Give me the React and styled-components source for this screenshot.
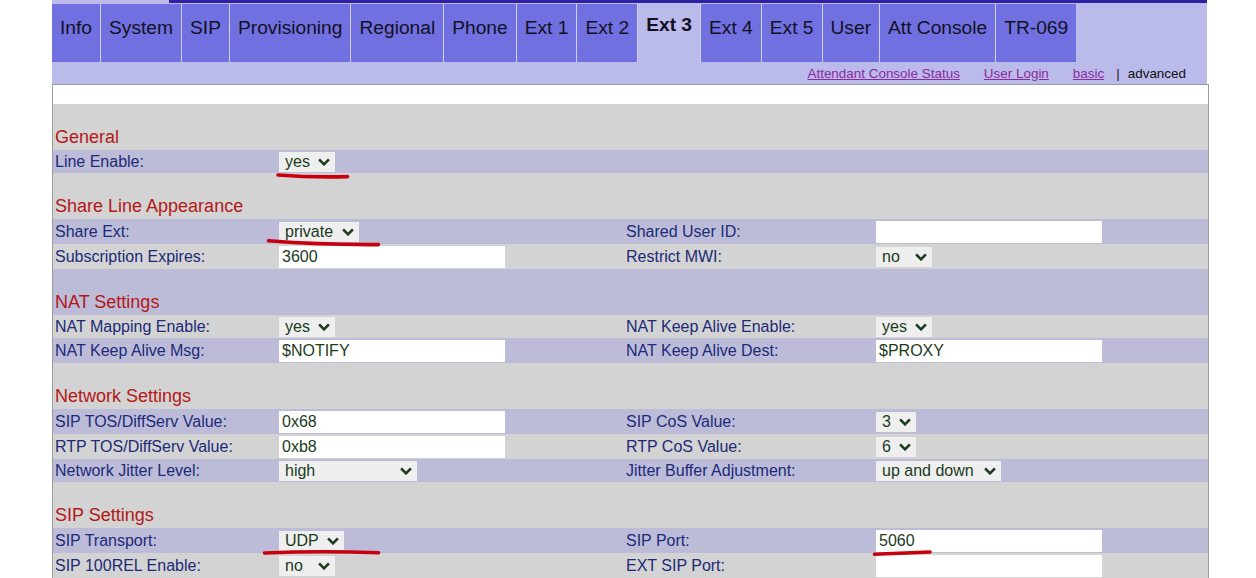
import React from 'react';
import styled, { createGlobalStyle } from 'styled-components';

const LAV = '#babaeb';
const TAB = '#7070e0';
const DARK = '#2d22a2';
const ROW_GREY = '#d3d3d3';
const ROW_LAV = '#bcbcd9';
const LABEL = '#202a78';
const HEAD = '#b31818';
const VALUE = '#1b3b1b';
const LINK = '#8b2a9b';

const GlobalStyle = createGlobalStyle`
  html, body { margin: 0; padding: 0; overflow: hidden; background: #ffffff; }
  body { font-family: "Liberation Sans", Arial, sans-serif; }
`;

const Root = styled.div`
  position: relative;
  width: 1256px;
  height: 578px;
  overflow: hidden;
`;

const Page = styled.div`
  margin-left: 52px;
  width: 1157px;
`;

const TopStrip = styled.div`
  display: flex;
  width: 1155px;
  height: 4px;
  background: ${LAV};
`;

const TopStripDark = styled.div`
  margin-left: 117px;
  flex: 1;
  height: 3px;
  background: ${DARK};
`;

const TabBar = styled.nav`
  display: flex;
  width: 1155px;
  height: 58px;
  background: ${LAV};
`;

const Tab = styled.div`
  padding: ${(p) => (p.$active ? '10px' : '13px')} 8px 0;
  font-size: 19.2px;
  line-height: 22px;
  font-weight: ${(p) => (p.$active ? 700 : 400)};
  color: #141024;
  background: ${(p) => (p.$active ? LAV : TAB)};
  white-space: nowrap;
  & + & {
    border-left: 1px solid #d2d2e6;
  }
`;

const LinkBar = styled.div`
  display: flex;
  justify-content: flex-end;
  align-items: center;
  width: 1155px;
  height: 22px;
  box-sizing: border-box;
  padding-right: 21px;
  background: ${LAV};
  font-size: 13.45px;
  line-height: 15px;
`;

const NavLink = styled.a`
  margin-left: 24px;
  color: ${LINK};
  text-decoration: underline;
  cursor: pointer;
`;

const Divider = styled.span`
  margin: 0 8px 0 12px;
  color: #222;
`;

const Current = styled.span`
  color: #111;
`;

const Panel = styled.section`
  width: 1157px;
  box-sizing: border-box;
  border: 1px solid #9c9c9c;
  border-bottom: none;
  background: #ffffff;
`;

const PanelTop = styled.div`
  height: 19px;
`;

const SectionHead = styled.div`
  display: flex;
  align-items: flex-end;
  height: 46px;
  box-sizing: border-box;
  padding: 0 0 2px 2px;
  background: ${(p) => p.$tone};
`;

const HeadTitle = styled.h3`
  margin: 0;
  font-size: 18px;
  line-height: 21px;
  font-weight: 400;
  color: ${HEAD};
`;

const FieldRow = styled.div`
  display: grid;
  grid-template-columns: 226px 345px 252px 1fr;
  align-items: baseline;
  padding: 2px 0 1px;
  background: ${(p) => p.$tone};
`;

const Label = styled.span`
  padding-left: 2px;
  font-size: 16px;
  color: ${LABEL};
  white-space: nowrap;
`;

const Cell = styled.div`
  display: flex;
  align-items: baseline;
`;

const TextInput = styled.input`
  width: 226px;
  height: 22px;
  box-sizing: border-box;
  margin: 0;
  padding: 0 3px;
  border: none;
  outline: none;
  background: #ffffff;
  font: 16px "Liberation Sans", Arial, sans-serif;
  color: ${VALUE};
`;

const SelectBox = styled.div`
  display: inline-flex;
  align-items: center;
  justify-content: space-between;
  width: ${(p) => p.$w}px;
  height: 20px;
  box-sizing: border-box;
  padding: 0 5px 0 6px;
  background: #efefef;
  font-size: 16px;
  line-height: 18px;
  color: ${VALUE};
  white-space: nowrap;
`;

const Chevron = styled.svg`
  flex: none;
  width: 12px;
  height: 8px;
`;

const Overlay = styled.svg`
  position: absolute;
  left: 0;
  top: 0;
  width: 1256px;
  height: 578px;
  pointer-events: none;
`;

const Scribble = styled.path`
  fill: none;
  stroke: #c8000e;
  stroke-width: 3.6;
  stroke-linecap: round;
`;

const Select = ({ value, width }) => (
  <SelectBox $w={width}>
    <span>{value}</span>
    <Chevron viewBox="0 0 12 8">
      <path d="M1.1 1.3 L6 6.3 L10.9 1.3" fill="none" stroke={VALUE} strokeWidth="2.6" />
    </Chevron>
  </SelectBox>
);

const Control = ({ c }) => {
  if (!c) return <Cell />;
  if (c.type === 'select') {
    return (
      <Cell>
        <Select value={c.value} width={c.w} />
      </Cell>
    );
  }
  return (
    <Cell>
      <TextInput type="text" defaultValue={c.value} />
    </Cell>
  );
};

const sel = (value, w) => ({ type: 'select', value, w });
const inp = (value) => ({ type: 'input', value });

const sections = [
  {
    title: 'General',
    rows: [{ l1: 'Line Enable:', c1: sel('yes', 56) }],
  },
  {
    title: 'Share Line Appearance',
    rows: [
      { l1: 'Share Ext:', c1: sel('private', 80), l2: 'Shared User ID:', c2: inp('') },
      { l1: 'Subscription Expires:', c1: inp('3600'), l2: 'Restrict MWI:', c2: sel('no', 56) },
    ],
  },
  {
    title: 'NAT Settings',
    rows: [
      { l1: 'NAT Mapping Enable:', c1: sel('yes', 56), l2: 'NAT Keep Alive Enable:', c2: sel('yes', 56) },
      { l1: 'NAT Keep Alive Msg:', c1: inp('$NOTIFY'), l2: 'NAT Keep Alive Dest:', c2: inp('$PROXY') },
    ],
  },
  {
    title: 'Network Settings',
    rows: [
      { l1: 'SIP TOS/DiffServ Value:', c1: inp('0x68'), l2: 'SIP CoS Value:', c2: sel('3', 40) },
      { l1: 'RTP TOS/DiffServ Value:', c1: inp('0xb8'), l2: 'RTP CoS Value:', c2: sel('6', 40) },
      { l1: 'Network Jitter Level:', c1: sel('high', 138), l2: 'Jitter Buffer Adjustment:', c2: sel('up and down', 125) },
    ],
  },
  {
    title: 'SIP Settings',
    rows: [
      { l1: 'SIP Transport:', c1: sel('UDP', 65), l2: 'SIP Port:', c2: inp('5060') },
      { l1: 'SIP 100REL Enable:', c1: sel('no', 56), l2: 'EXT SIP Port:', c2: inp('') },
    ],
  },
];

const tabs = ['Info', 'System', 'SIP', 'Provisioning', 'Regional', 'Phone', 'Ext 1', 'Ext 2', 'Ext 3', 'Ext 4', 'Ext 5', 'User', 'Att Console', 'TR-069'];

export default function App() {
  let idx = 0;
  const tone = () => (idx++ % 2 === 0 ? ROW_GREY : ROW_LAV);

  const body = [];
  sections.forEach((s) => {
    body.push(
      <SectionHead key={s.title} $tone={tone()}>
        <HeadTitle>{s.title}</HeadTitle>
      </SectionHead>
    );
    s.rows.forEach((r) => {
      body.push(
        <FieldRow key={r.l1} $tone={tone()}>
          <Label>{r.l1}</Label>
          <Control c={r.c1} />
          {r.l2 ? <Label>{r.l2}</Label> : <Cell />}
          <Control c={r.c2} />
        </FieldRow>
      );
    });
  });

  return (
    <Root>
      <GlobalStyle />
      <Page>
        <TopStrip>
          <TopStripDark />
        </TopStrip>
        <TabBar>
          {tabs.map((t) => (
            <Tab key={t} $active={t === 'Ext 3'}>
              {t}
            </Tab>
          ))}
        </TabBar>
        <LinkBar>
          <NavLink>Attendant Console Status</NavLink>
          <NavLink>User Login</NavLink>
          <NavLink>basic</NavLink>
          <Divider>|</Divider>
          <Current>advanced</Current>
        </LinkBar>
        <Panel>
          <PanelTop />
          {body}
        </Panel>
      </Page>
      <Overlay viewBox="0 0 1256 578">
        <Scribble d="M278 175 Q313 177.6 347.5 176.6" />
        <Scribble d="M268.5 240.8 Q322 245 378.5 244.6" />
        <Scribble d="M264.5 553 Q320 550.6 378.5 552.8" />
        <Scribble d="M874.5 554.2 Q902 553 930 552" />
      </Overlay>
    </Root>
  );
}
